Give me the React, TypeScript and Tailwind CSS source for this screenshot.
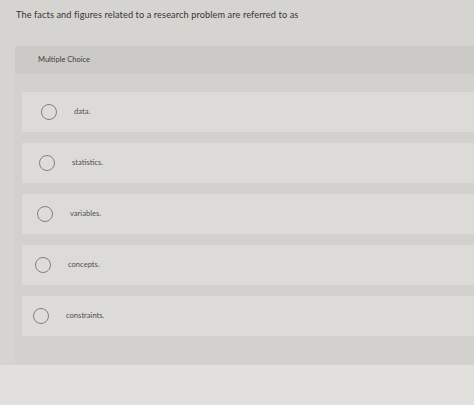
import React from "react";

const options = [
  { label: "data.", pl: "pl-[19px]" },
  { label: "statistics.", pl: "pl-[17px]" },
  { label: "variables.", pl: "pl-[15px]" },
  { label: "concepts.", pl: "pl-[13px]" },
  { label: "constraints.", pl: "pl-[11px]" },
];

export default function App() {
  return (
    <div
      className="w-[474px] h-[405px] overflow-hidden bg-[#d6d4d1] flex flex-col"
      style={{ fontFamily: "Lato, 'Open Sans', sans-serif" }}
    >
      <div className="pl-4 pt-[9px] h-[46px] text-[9.2px] text-[#353535] leading-[12px] tracking-[0.1px]">
        The facts and figures related to a research problem are referred to as
      </div>
      <div className="ml-[15px] bg-[#d2d1ce] flex flex-col">
        <div className="h-[28px] bg-[#cbcac7] flex items-center pl-[23px] text-[7.5px] text-[#3e3e3e]">
          Multiple Choice
        </div>
        <div className="flex flex-col gap-[11px] pt-[18px] pb-[29px] pl-[7px]">
          {options.map((o) => (
            <div
              key={o.label}
              className={`h-[40px] bg-[#dcdbd7] flex items-center ${o.pl}`}
            >
              <div className="w-[16px] h-[16px] rounded-full border border-[#808080] bg-[#dedcd8]" />
              <span className="ml-[17px] text-[7.6px] text-[#505050]">{o.label}</span>
            </div>
          ))}
        </div>
      </div>
      <div className="flex-1 bg-[#e2e0dc]" />
    </div>
  );
}
